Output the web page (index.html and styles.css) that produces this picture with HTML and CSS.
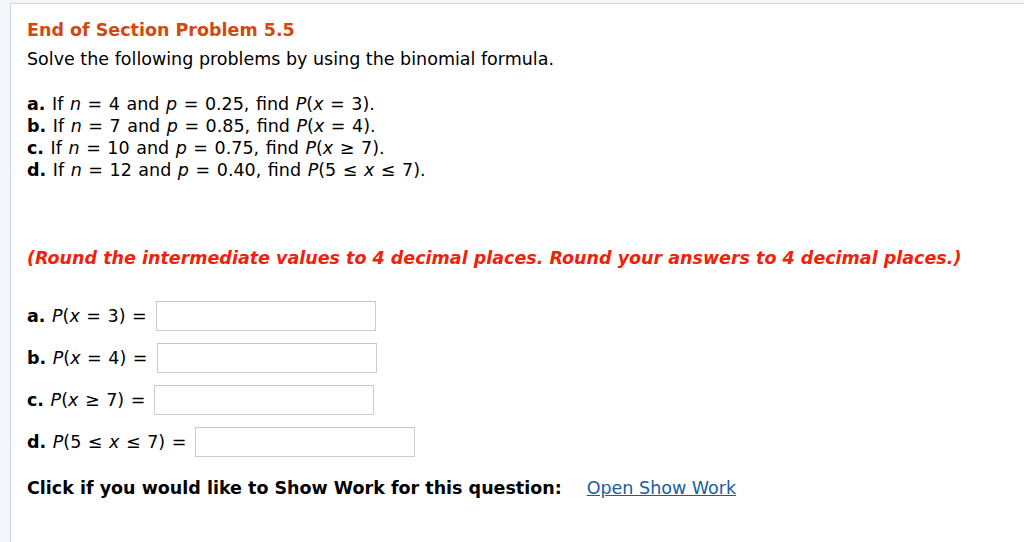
FILE: index.html
```html
<!DOCTYPE html>
<html>
<head>
<meta charset="utf-8">
<link rel="stylesheet" href="styles.css">
</head>
<body>
<div class="panel">
  <div class="title">End of Section Problem 5.5</div>
  <div class="intro">Solve the following problems by using the binomial formula.</div>
  <div class="list">
    <div><b>a.</b> If <i>n</i> = 4 and <i>p</i> = 0.25, find <i>P</i>(<i>x</i> = 3).</div>
    <div><b>b.</b> If <i>n</i> = 7 and <i>p</i> = 0.85, find <i>P</i>(<i>x</i> = 4).</div>
    <div><b>c.</b> If <i>n</i> = 10 and <i>p</i> = 0.75, find <i>P</i>(<i>x</i> ≥ 7).</div>
    <div><b>d.</b> If <i>n</i> = 12 and <i>p</i> = 0.40, find <i>P</i>(5 ≤ <i>x</i> ≤ 7).</div>
  </div>
  <div class="note">(Round the intermediate values to 4 decimal places. Round your answers to 4 decimal places.)</div>
  <div class="answers">
    <div class="row"><span class="label"><b>a.</b> <i>P</i>(<i>x</i> = 3) =</span><input class="box" type="text"></div>
    <div class="row"><span class="label"><b>b.</b> <i>P</i>(<i>x</i> = 4) =</span><input class="box" type="text"></div>
    <div class="row"><span class="label"><b>c.</b> <i>P</i>(<i>x</i> ≥ 7) =</span><input class="box" type="text"></div>
    <div class="row"><span class="label"><b>d.</b> <i>P</i>(5 ≤ <i>x</i> ≤ 7) =</span><input class="box" type="text"></div>
  </div>
  <div class="showwork"><b>Click if you would like to Show Work for this question:</b><a href="#" class="link">Open Show Work</a></div>
</div>
</body>
</html>
```
FILE: styles.css
```css
html, body {
  margin: 0;
  padding: 0;
  background: #f3f6fa;
  height: 100%;
}
body {
  font-family: "DejaVu Sans", Verdana, sans-serif;
  font-size: 17.5px;
  color: #000;
  overflow: hidden;
}
.panel {
  margin: 3px 0 0 10px;
  border-left: 1px solid #cfd6e0;
  border-top: 1px solid #cfd6e0;
  background: #fff;
  padding: 16px 0 0 16px;
  box-sizing: border-box;
  height: calc(100% - 3px);
}
.title {
  color: #d04a10;
  font-weight: bold;
  line-height: 20px;
}
.intro {
  margin-top: 9px;
  line-height: 20px;
}
.list {
  margin-top: 24px;
  line-height: 22px;
  word-spacing: 1px;
}
.note {
  margin-top: 66px;
  line-height: 22px;
  color: #f0220a;
  font-weight: bold;
  font-style: italic;
}
.answers {
  margin-top: 32px;
  display: flex;
  flex-direction: column;
  gap: 12px;
}
.row {
  display: flex;
  align-items: center;
  height: 30px;
}
.label {
  word-spacing: 1px;
}
.box {
  margin: 0 0 0 9px;
  width: 220px;
  height: 30px;
  box-sizing: border-box;
  border: 1px solid #cccccc;
  border-top-color: #c4c4c4;
  background: #fff;
  padding: 0;
}
.showwork {
  margin-top: 20px;
  line-height: 22px;
}
.link {
  margin-left: 25px;
  color: #1c5d9a;
  text-decoration: underline;
}
```
